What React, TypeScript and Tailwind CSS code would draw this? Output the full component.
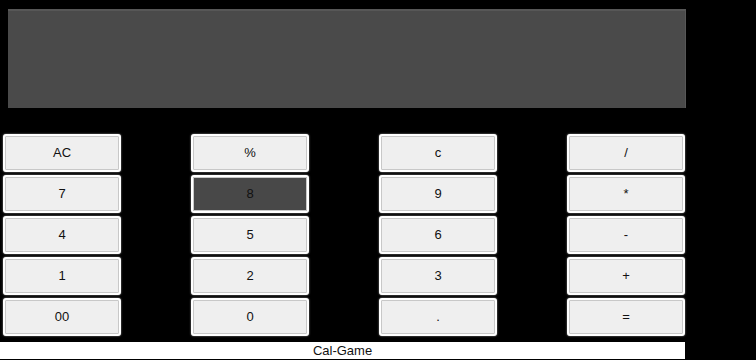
import React from 'react';

const keys = ['AC', '%', 'c', '/', '7', '8', '9', '*', '4', '5', '6', '-', '1', '2', '3', '+', '00', '0', '.', '='];

function Key({ label, active }: { label: string; active?: boolean }) {
  return (
    <button
      className={`h-[38px] w-[118px] rounded-[3px] border-2 border-white text-[13px] text-[#111] shadow-[inset_0_0_0_1px_#c8c8c8,0_0_2px_rgba(255,255,255,0.6)] ${
        active ? 'bg-[#484848]' : 'bg-[#efefef]'
      }`}
    >
      {label}
    </button>
  );
}

export default function App() {
  return (
    <div className="min-h-[360px] w-[756px] bg-black font-['Liberation_Sans',Arial,sans-serif]">
      <div className="flex w-[686px] flex-col">
        <div className="ml-2 mt-[9px] h-[99px] w-[678px] border-t-2 border-r border-[#575757] bg-[#4a4a4a]" />
        <div className="mt-[26px] grid grid-cols-4 gap-x-[70px] gap-y-[3px] pl-[3px] pr-[1px]">
          {keys.map((k) => (
            <Key key={k} label={k} active={k === '8'} />
          ))}
        </div>
        <div className="mt-[6px] h-[17px] w-[685px] bg-white text-center text-[13px] leading-[17px] text-[#111]">
          Cal-Game
        </div>
      </div>
    </div>
  );
}
